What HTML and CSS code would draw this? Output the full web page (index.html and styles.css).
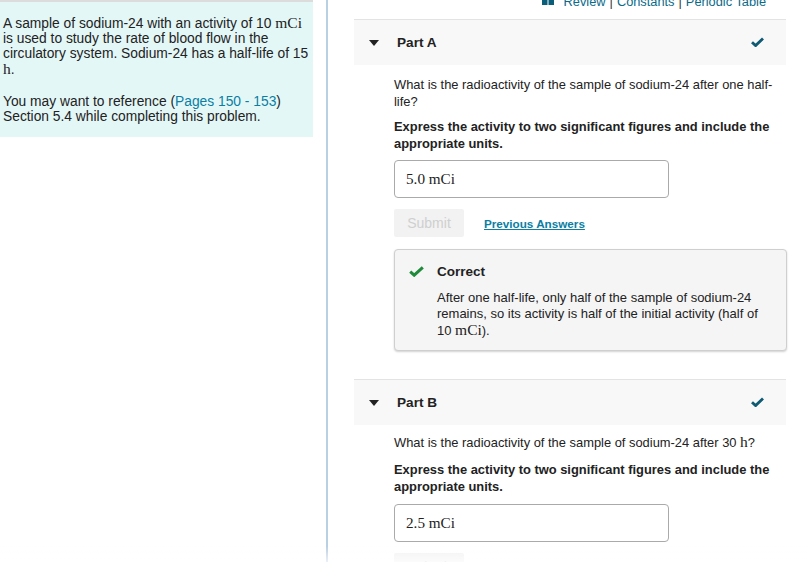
FILE: index.html
```html
<!DOCTYPE html>
<html>
<head>
<meta charset="utf-8">
<link rel="stylesheet" href="styles.css">
</head>
<body>
<div class="page">
  <aside class="side">
    <div class="intro">
      <p>A sample of sodium-24 with an activity of 10 <span class="m">mCi</span> is used to study the rate of blood flow in the circulatory system. Sodium-24 has a half-life of 15 <span class="m">h</span>.</p>
      <p>You may want to reference (<a class="ref">Pages 150 - 153</a>) Section 5.4 while completing this problem.</p>
    </div>
  </aside>
  <main class="main">
    <div class="toplinks">
      <svg class="book" width="12" height="10" viewBox="0 0 12 10"><rect x="0" y="0" width="5.5" height="10" fill="#0b5e7a"/><rect x="6.5" y="0" width="5.5" height="10" fill="#0b5e7a"/></svg>
      <span>Review</span><span class="sep">|</span><span>Constants</span><span class="sep">|</span><span>Periodic Table</span>
    </div>

    <section class="part">
      <div class="part-head">
        <svg class="tri" width="10" height="6" viewBox="0 0 10 6"><path d="M0 0 L10 0 L5 6 Z" fill="#222"/></svg>
        <span class="part-title">Part A</span>
        <svg class="check" width="13" height="10" viewBox="0 0 13 10"><path d="M1 5.2 L4.6 8.6 L12 1.4" fill="none" stroke="#0e5b73" stroke-width="2.8"/></svg>
      </div>
      <div class="part-body">
        <p class="q">What is the radioactivity of the sample of sodium-24 after one half-life?</p>
        <p class="instr">Express the activity to two significant figures and include the appropriate units.</p>
        <div class="answer"><span class="m">5.0 mCi</span></div>
        <div class="actions">
          <span class="submit">Submit</span>
          <a class="prev">Previous Answers</a>
        </div>
        <div class="feedback">
          <svg class="gcheck" width="15" height="11" viewBox="0 0 15 11"><path d="M1.2 5.6 L5.2 9.2 L13.8 1.4" fill="none" stroke="#1f8a3a" stroke-width="3"/></svg>
          <div class="fb-text">
            <div class="fb-title">Correct</div>
            <p>After one half-life, only half of the sample of sodium-24 remains, so its activity is half of the initial activity (half of 10&nbsp;<span class="m">mCi</span>).</p>
          </div>
        </div>
      </div>
    </section>

    <section class="part partb">
      <div class="part-head">
        <svg class="tri" width="10" height="6" viewBox="0 0 10 6"><path d="M0 0 L10 0 L5 6 Z" fill="#222"/></svg>
        <span class="part-title">Part B</span>
        <svg class="check" width="13" height="10" viewBox="0 0 13 10"><path d="M1 5.2 L4.6 8.6 L12 1.4" fill="none" stroke="#0e5b73" stroke-width="2.8"/></svg>
      </div>
      <div class="part-body">
        <p class="q">What is the radioactivity of the sample of sodium-24 after 30 <span class="m">h</span>?</p>
        <p class="instr">Express the activity to two significant figures and include the appropriate units.</p>
        <div class="answer"><span class="m">2.5 mCi</span></div>
        <div class="actions">
          <span class="submit">Submit</span>
          <a class="prev">Previous Answers</a>
        </div>
      </div>
    </section>
  </main>
</div>
<div class="fade"></div>
</body>
</html>
```
FILE: styles.css
```css
html, body {
  margin: 0;
  padding: 0;
  background: #fff;
  overflow: hidden;
}
body {
  font-family: "Liberation Sans", Arial, Helvetica, sans-serif;
  color: #222;
  height: 562px;
}
p { margin: 0; }
.m {
  font-family: "Liberation Serif", "Times New Roman", serif;
  font-size: 15.5px;
}
.page {
  display: flex;
  height: 562px;
}
.side {
  width: 326px;
  flex: none;
  border-right: 2px solid #b9cfe2;
}
.intro {
  width: 307px;
  background: #e4f7f7;
  border-top: 2px solid #dcdcdc;
  padding: 13px 3px 13px 3px;
  font-size: 13.8px;
  line-height: 15px;
}
.intro p + p { margin-top: 17px; }
.ref { color: #0a7ea3; }
.main {
  flex: 1;
  padding-left: 26px;
}
.toplinks {
  width: 432px;
  display: flex;
  justify-content: flex-end;
  align-items: flex-start;
  gap: 4px;
  padding-right: 20px;
  box-sizing: border-box;
  font-size: 12.8px;
  color: #0b6a8a;
  line-height: 12px;
  margin-top: -4px;
  height: 23px;
}
.toplinks .book { margin-top: -1px; margin-right: 6px; }
.toplinks .sep { color: #333; }
.part {
  width: 432px;
}
.part-head {
  height: 45px;
  background: #f8f8f8;
  border-top: 1px solid #e3e3e3;
  display: flex;
  align-items: center;
  padding: 0 22px 0 15px;
}
.tri { margin-top: 1px; }
.part-title {
  font-weight: bold;
  font-size: 13.6px;
  margin-left: 18px;
  flex: 1;
}
.check { margin-top: -2px; }
.part-body {
  padding: 11px 0 0 40px;
}
.q {
  font-size: 12.9px;
  line-height: 17px;
  padding-right: 4px;
}
.instr {
  font-size: 12.9px;
  font-weight: bold;
  line-height: 17px;
  margin-top: 8px;
  padding-right: 4px;
}
.answer {
  margin-top: 8px;
  width: 275px;
  height: 38px;
  box-sizing: border-box;
  border: 1px solid #aaa;
  border-radius: 4px;
  padding: 0 11px;
  display: flex;
  align-items: center;
  color: #222;
}
.answer .m { font-size: 15.2px; }
.actions {
  display: flex;
  align-items: center;
  margin-top: 11px;
  gap: 20px;
}
.submit {
  width: 70px;
  height: 28px;
  background: #f2f2f2;
  border-radius: 2px;
  color: #cfcfcf;
  font-size: 14px;
  display: flex;
  align-items: center;
  justify-content: center;
}
.prev {
  color: #0a7ea3;
  font-weight: bold;
  font-size: 11.7px;
  text-decoration: underline;
}
.feedback {
  margin-top: 12px;
  width: 393px;
  box-sizing: border-box;
  border: 1px solid #cfcfcf;
  border-radius: 4px;
  background: #f5f5f5;
  box-shadow: 0 1px 2px rgba(0,0,0,0.18);
  display: flex;
  padding: 14px 22px 12px 14px;
  gap: 13px;
  height: 102px;
}
.gcheck { flex: none; margin-top: 2px; }
.fb-title {
  font-weight: bold;
  font-size: 13.5px;
  line-height: 16px;
}
.fb-text p {
  margin-top: 10px;
  font-size: 13px;
  line-height: 16px;
}
.partb { margin-top: 28px; }
.partb .part-body { padding-top: 8px; }
.partb .instr { margin-top: 10px; }
.partb .answer { margin-top: 9px; }
.fade {
  position: fixed;
  left: 0;
  right: 0;
  bottom: 0;
  height: 16px;
  background: linear-gradient(to bottom, rgba(255,255,255,0), rgba(255,255,255,0.7));
  pointer-events: none;
}
```
